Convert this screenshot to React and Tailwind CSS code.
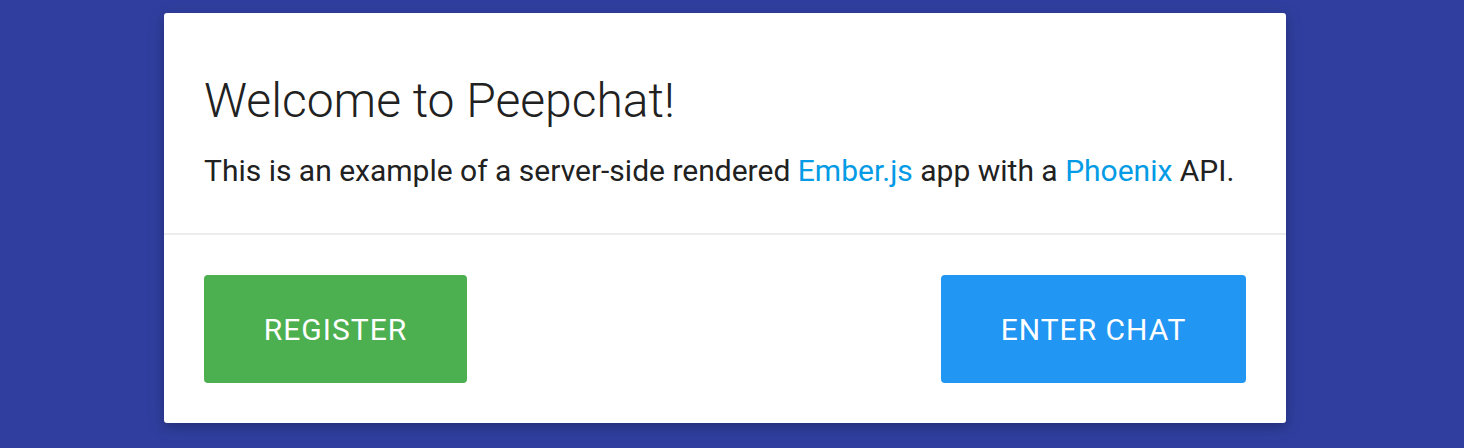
import React from 'react';

const Welcome = () => {
  return (
    <div className="min-h-screen w-full bg-[#303f9f] pt-[13px] font-['Roboto',_'Liberation_Sans',_sans-serif]">
      <div className="ml-[164px] w-[1122px] bg-white rounded-[3px] shadow-[0_4px_10px_rgba(0,0,0,0.16),0_4px_20px_rgba(0,0,0,0.12)]">
        <div className="p-[40px] text-[#212121]">
          <h1 className="text-[48px] leading-[96px] font-light">Welcome to Peepchat!</h1>
          <p className="text-[30px] leading-[44px]">
            This is an example of a server-side rendered{' '}
            <a href="#" className="text-[#039be5]">Ember.js</a> app with a{' '}
            <a href="#" className="text-[#039be5]">Phoenix</a> API.
          </p>
        </div>
        <div className="flex justify-between border-t-2 border-[#ececec] p-[40px]">
          <button className="w-[263px] h-[108px] rounded-[4px] bg-[#4caf50] text-white text-[30px] uppercase tracking-[1px]">
            Register
          </button>
          <button className="w-[305px] h-[108px] rounded-[4px] bg-[#2196f3] text-white text-[30px] uppercase tracking-[1px]">
            Enter Chat
          </button>
        </div>
      </div>
    </div>
  );
};

export default Welcome;
